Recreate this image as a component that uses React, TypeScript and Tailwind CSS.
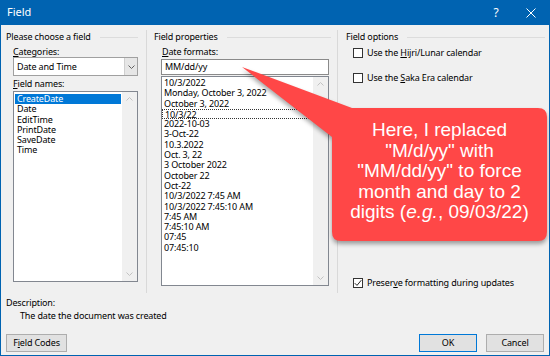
import React from "react";

const font = { fontFamily: '"Noto Sans", "Open Sans", sans-serif' };

const dateFormats = [
  "10/3/2022",
  "Monday, October 3, 2022",
  "October 3, 2022",
  "10/3/22",
  "2022-10-03",
  "3-Oct-22",
  "10.3.2022",
  "Oct. 3, 22",
  "3 October 2022",
  "October 22",
  "Oct-22",
  "10/3/2022 7:45 AM",
  "10/3/2022 7:45:10 AM",
  "7:45 AM",
  "7:45:10 AM",
  "07:45",
  "07:45:10",
];

const fieldNames = ["CreateDate", "Date", "EditTime", "PrintDate", "SaveDate", "Time"];

function Chevron({ up }: { up?: boolean }) {
  return (
    <svg width="7" height="4" viewBox="0 0 7 4" className="block">
      <path d={up ? "M0.5 3.5 L3.5 0.5 L6.5 3.5" : "M0.5 0.5 L3.5 3.5 L6.5 0.5"} fill="none" stroke="#c2c2c2" strokeWidth="1" />
    </svg>
  );
}

function GroupHeader({ title }: { title: string }) {
  return (
    <div className="flex items-center h-[14px]">
      <span className="leading-[14px] whitespace-nowrap">{title}</span>
      <div className="flex-1 h-px bg-[#dcdcdc] ml-[9px]" />
    </div>
  );
}

function Checkbox({ checked, children }: { checked?: boolean; children: React.ReactNode }) {
  return (
    <div className="flex items-center h-[12px]">
      <div className="w-[10px] h-[10px] border border-[#333333] bg-white flex items-center justify-center">
        {checked && (
          <svg width="8" height="8" viewBox="0 0 8 8">
            <path d="M0.8 4.2 L3 6.4 L7.3 1.2" fill="none" stroke="#222" strokeWidth="1" />
          </svg>
        )}
      </div>
      <span className="ml-[4px] leading-[12px] whitespace-nowrap">{children}</span>
    </div>
  );
}

function Scrollbar() {
  return (
    <div className="w-[15px] bg-[#f0f0f0] flex flex-col items-center justify-between py-[5px]">
      <Chevron up />
      <Chevron />
    </div>
  );
}

export default function App() {
  return (
    <div
      className="relative w-[550px] h-[356px] bg-[#0063b1] flex flex-col text-[9px] tracking-[-0.15px] text-black overflow-hidden"
      style={font}
    >
      {/* title bar */}
      <div className="h-[25px] flex items-center text-white shrink-0">
        <span className="pl-[7px] text-[11px] tracking-normal">Field</span>
        <div className="ml-auto flex items-center h-full pr-[1px]">
          <span className="w-[34px] text-center text-[12px] tracking-normal">?</span>
          <div className="w-[36px] flex items-center justify-center">
            <svg width="10" height="10" viewBox="0 0 10 10">
              <path d="M0.5 0.5 L9.5 9.5 M9.5 0.5 L0.5 9.5" stroke="white" strokeWidth="1" />
            </svg>
          </div>
        </div>
      </div>

      <div className="mx-[1px] mb-[1px] flex-1 bg-[#f0f0f0] flex flex-col">
        {/* top groups */}
        <div className="pt-[5px] flex h-[268px] shrink-0">
          {/* group 1 */}
          <div className="w-[146px] border-r border-[#d9d9d9] flex flex-col">
            <div className="pl-[5px] pr-[8px]">
              <GroupHeader title="Please choose a field" />
            </div>
            <div className="pl-[12px] pr-[8px] flex flex-col">
              <div className="mt-[2px] h-[11px] leading-[11px]">
                <span className="underline">C</span>ategories:
              </div>
              <div className="h-[19px] border border-[#a0a0a0] bg-white flex">
                <span className="flex-1 pl-[3px] leading-[17px]">Date and Time</span>
                <div className="w-[13px] bg-[#e6e6e6] border-l border-[#cfcfcf] flex items-center justify-center">
                  <svg width="7" height="4" viewBox="0 0 7 4">
                    <path d="M0.5 0.5 L3.5 3.5 L6.5 0.5" fill="none" stroke="#606060" strokeWidth="1" />
                  </svg>
                </div>
              </div>
              <div className="mt-[2px] h-[12px] leading-[12px]">
                <span className="underline">F</span>ield names:
              </div>
              <div className="mt-[1px] h-[191px] border border-[#828790] bg-white flex">
                <div className="flex-1 p-px pt-[2px]">
                  {fieldNames.map((n, i) => (
                    <div
                      key={n}
                      className={
                        "h-[10.3px] leading-[10.3px] pl-[2px] " + (i === 0 ? "bg-[#0078d7] text-white" : "")
                      }
                    >
                      {n}
                    </div>
                  ))}
                </div>
                <Scrollbar />
              </div>
            </div>
          </div>

          {/* group 2 */}
          <div className="w-[191px] border-r border-[#d9d9d9] flex flex-col">
            <div className="pl-[7px] pr-[6px]">
              <GroupHeader title="Field properties" />
            </div>
            <div className="pl-[14px] pr-[8px] flex flex-col">
              <div className="mt-[2px] h-[11px] leading-[11px] pl-px">
                <span className="underline">D</span>ate formats:
              </div>
              <div className="mt-[2px] h-[16px] border border-[#8a8a8a] bg-white pl-[3px] leading-[14px]">MM/dd/yy</div>
              <div className="mt-[1px] h-[210px] border border-[#828790] bg-white flex">
                <div className="flex-1 pt-[1px]">
                  {dateFormats.map((d, i) => (
                    <div
                      key={d}
                      className={
                        "h-[10.3px] leading-[10.3px] pl-[2px] whitespace-nowrap " +
                        (i === 3 ? "border border-dotted border-[#333] pl-[1px] leading-[8.3px]" : "")
                      }
                    >
                      {d}
                    </div>
                  ))}
                </div>
                <Scrollbar />
              </div>
            </div>
          </div>

          {/* group 3 */}
          <div className="flex-1 flex flex-col">
            <div className="pl-[8px] pr-[4px]">
              <GroupHeader title="Field options" />
            </div>
            <div className="pl-[15px] flex flex-col flex-1">
              <div className="mt-[3px]">
                <Checkbox>
                  Use the <span className="underline">H</span>ijri/Lunar calendar
                </Checkbox>
              </div>
              <div className="mt-[13px]">
                <Checkbox>
                  Use the <span className="underline">S</span>aka Era calendar
                </Checkbox>
              </div>
              <div className="mt-auto mb-[4px]">
                <Checkbox checked>
                  Preser<span className="underline">v</span>e formatting during updates
                </Checkbox>
              </div>
            </div>
          </div>
        </div>

        {/* description and buttons */}
        <div className="px-[5px] flex flex-col flex-1">
          <div className="mt-[4px] h-[12px] leading-[12px]">Description:</div>
          <div className="mt-[1px] h-[12px] leading-[12px] pl-[14px]">The date the document was created</div>
          <div className="mt-[12px] flex items-center">
            <button className="w-[61px] h-[18px] bg-[#e1e1e1] border border-[#adadad] leading-[16px]">
              F<span className="underline">i</span>eld Codes
            </button>
            <button className="ml-auto w-[58px] h-[18px] bg-[#e1e1e1] border border-[#0078d7] leading-[16px]">
              OK
            </button>
            <button className="ml-[9px] w-[58px] h-[18px] bg-[#e1e1e1] border border-[#adadad] leading-[16px]">
              Cancel
            </button>
          </div>
        </div>
      </div>

      {/* annotation callout */}
      <svg
        className="absolute left-0 top-0 pointer-events-none drop-shadow-[0_3px_2px_rgba(0,0,0,0.35)]"
        width="550"
        height="356"
        viewBox="0 0 550 356"
      >
        <path
          d="M242 67 L352 108 L538 108 Q547 108 547 117 L547 232 Q547 241 538 241 L341 241 Q332 241 332 232 L332 137 Z"
          fill="#ff4747"
        />
      </svg>
      <div
        className="absolute left-[332px] top-[120px] w-[215px] text-center text-white text-[19px] leading-[20.5px] tracking-normal"
        style={{ fontFamily: '"Liberation Sans", Arial, sans-serif' }}
      >
        Here, I replaced
        <br />
        "M/d/yy" with
        <br />
        "MM/dd/yy" to force
        <br />
        month and day to 2
        <br />
        digits (<i>e.g.</i>, 09/03/22)
      </div>
    </div>
  );
}
